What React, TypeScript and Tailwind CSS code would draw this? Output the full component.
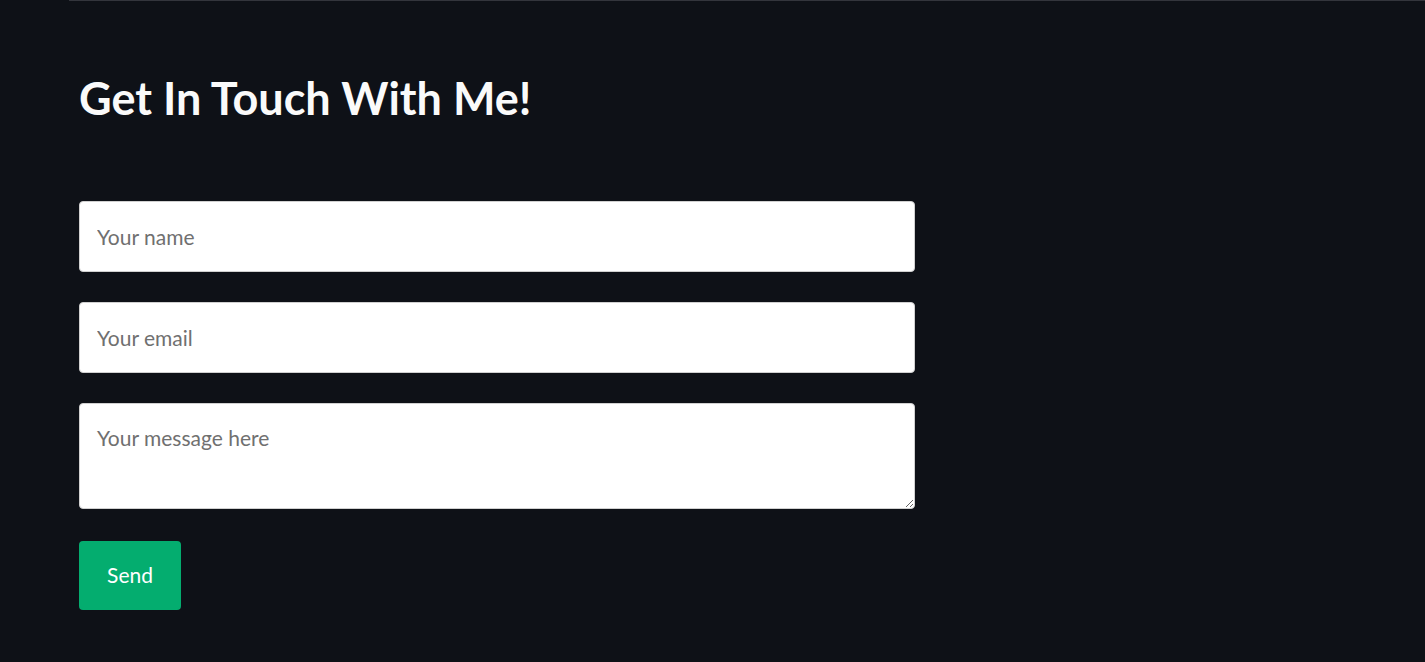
export default function App() {
  return (
    <div className="min-h-[662px] w-full bg-[#0e1117] font-['Lato','Liberation_Sans',sans-serif]">
      <div className="ml-[69px] h-px bg-[#33353c]" />
      <div className="pl-[79px] pt-[67px]">
        <h1 className="text-[45px] font-bold leading-[60px] text-[#fafafa]">Get In Touch With Me!</h1>

        <form className="mt-[73px] flex w-[836px] flex-col" onSubmit={(e) => e.preventDefault()}>
          <input
            type="text"
            placeholder="Your name"
            className="h-[71px] rounded-[4px] border border-[#d0d0d0] bg-white px-[17px] pb-px text-[21px] text-[#31333f] placeholder:text-[#707070] outline-none"
          />
          <input
            type="email"
            placeholder="Your email"
            className="mt-[30px] h-[71px] rounded-[4px] border border-[#d0d0d0] bg-white px-[17px] pb-px text-[21px] text-[#31333f] placeholder:text-[#707070] outline-none"
          />
          <textarea
            placeholder="Your message here"
            className="mt-[30px] h-[106px] rounded-[4px] border border-[#d0d0d0] bg-white px-[17px] pt-[21px] text-[21px] leading-[26px] text-[#31333f] placeholder:text-[#707070] outline-none"
          />
          <div className="mt-[32px]">
            <button
              type="submit"
              className="h-[69px] w-[102px] rounded-[4px] bg-[#04ad6f] pb-px text-[21px] text-white"
            >
              Send
            </button>
          </div>
        </form>
      </div>
    </div>
  )
}
